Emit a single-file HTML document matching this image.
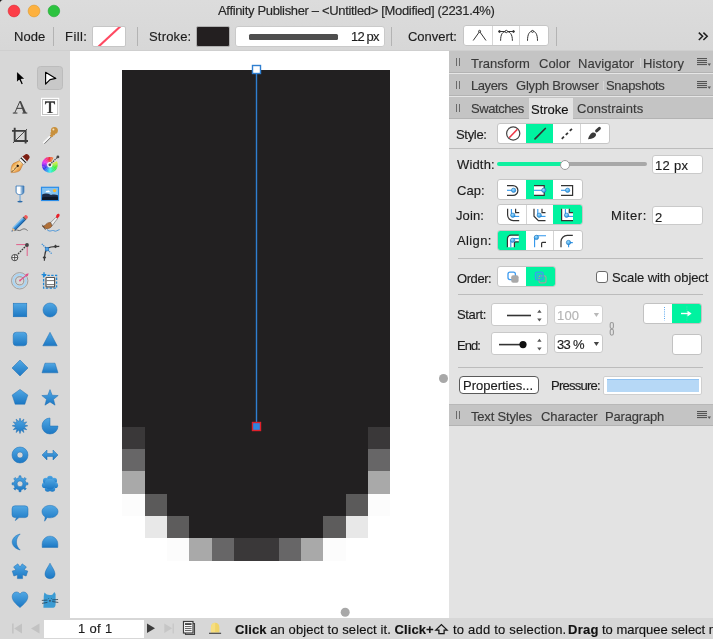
<!DOCTYPE html>
<html><head><meta charset="utf-8">
<style>
*{margin:0;padding:0;box-sizing:border-box}
html,body{width:713px;height:639px;overflow:hidden}
body{position:relative;background:#d9d9d9;font-family:"Liberation Sans",sans-serif;font-size:13px;color:#1a1a1a}
.a{position:absolute}
.t{position:absolute;white-space:nowrap;line-height:1;-webkit-text-stroke:0.15px currentColor;will-change:transform}
.tab{position:absolute;white-space:nowrap;line-height:1;color:#4b4b4b;font-size:13px}
.lb{position:absolute;white-space:nowrap;line-height:1;color:#1c1c1c;font-size:13px}
svg{position:absolute;left:0;top:0}
</style></head><body>

<div class="a" style="left:0;top:0;width:713px;height:50px;background:linear-gradient(#dcdcdc,#d7d7d7)"></div>
<div class="a" style="left:0;top:50px;width:713px;height:1px;background:#cfcfcf"></div>
<div class="a" style="left:0;top:51px;width:70px;height:567px;background:#d7d7d7"></div>
<div class="a" style="left:70px;top:51px;width:379px;height:567px;background:#ffffff"></div>
<div class="a" style="left:449px;top:51px;width:264px;height:567px;background:#e3e3e3"></div>
<div class="a" style="left:0;top:618px;width:713px;height:21px;background:#d7d7d7"></div>
<svg width="713" height="639" viewBox="0 0 713 639"><rect x="122" y="70" width="268" height="491" fill="#222021" shape-rendering="crispEdges"/></svg>
<svg width="713" height="639" viewBox="0 0 713 639" shape-rendering="crispEdges"><rect x="122" y="427" width="23.00" height="22.00" fill="#3a3839"/><rect x="368" y="427" width="22.00" height="22.00" fill="#3a3839"/><rect x="122" y="449" width="23.00" height="22.00" fill="#676667"/><rect x="368" y="449" width="22.00" height="22.00" fill="#676667"/><rect x="122" y="471" width="23.00" height="23.00" fill="#a9a9a9"/><rect x="368" y="471" width="22.00" height="23.00" fill="#a9a9a9"/><rect x="122" y="494" width="23.00" height="22.00" fill="#fcfcfc"/><rect x="368" y="494" width="22.00" height="22.00" fill="#fcfcfc"/><rect x="145" y="494" width="22.00" height="22.00" fill="#5b5a5a"/><rect x="346" y="494" width="22.00" height="22.00" fill="#5b5a5a"/><rect x="122" y="516" width="23.00" height="22.00" fill="#ffffff"/><rect x="368" y="516" width="22.00" height="22.00" fill="#ffffff"/><rect x="145" y="516" width="22.00" height="22.00" fill="#e8e8e8"/><rect x="346" y="516" width="22.00" height="22.00" fill="#e8e8e8"/><rect x="167" y="516" width="22.00" height="22.00" fill="#5d5c5c"/><rect x="323" y="516" width="23.00" height="22.00" fill="#5d5c5c"/><rect x="122" y="538" width="23.00" height="23.00" fill="#ffffff"/><rect x="368" y="538" width="22.00" height="23.00" fill="#ffffff"/><rect x="145" y="538" width="22.00" height="23.00" fill="#ffffff"/><rect x="346" y="538" width="22.00" height="23.00" fill="#ffffff"/><rect x="167" y="538" width="22.00" height="23.00" fill="#fcfcfc"/><rect x="323" y="538" width="23.00" height="23.00" fill="#fcfcfc"/><rect x="189" y="538" width="23.00" height="23.00" fill="#a9a9a9"/><rect x="301" y="538" width="22.00" height="23.00" fill="#a9a9a9"/><rect x="212" y="538" width="22.00" height="23.00" fill="#676667"/><rect x="279" y="538" width="22.00" height="23.00" fill="#676667"/><rect x="234" y="538" width="22.00" height="23.00" fill="#3a3839"/><rect x="256" y="538" width="23.00" height="23.00" fill="#3a3839"/></svg>
<svg width="713" height="639" viewBox="0 0 713 639">
<line x1="256.5" y1="70" x2="256.5" y2="426" stroke="#2f7fd0" stroke-width="1.4"/>
<rect x="252.5" y="65.5" width="8" height="8" fill="#ffffff" stroke="#2f7fd0" stroke-width="1.4"/>
<rect x="252.5" y="422.5" width="8" height="8" fill="#2f86e0" stroke="#e0202a" stroke-width="1.4"/>
<circle cx="443.5" cy="378.5" r="4.5" fill="#a8a8a8"/>
<circle cx="345.2" cy="612.3" r="4.5" fill="#a8a8a8"/>
</svg>
<svg width="713" height="639" viewBox="0 0 713 639">
<circle cx="14" cy="11" r="5.9" fill="#fc3e48" stroke="#dc2c36" stroke-width="0.6"/><path d="M0 0 H2.6 Q0.4 0.4 0 2.6 Z" fill="#111"/>
<circle cx="34" cy="11" r="5.9" fill="#fdb13f" stroke="#df9a2e" stroke-width="0.6"/>
<circle cx="53.9" cy="11" r="5.8" fill="#2cc33f" stroke="#1ea532" stroke-width="0.6"/>
</svg>
<div class="t" style="left:217.79px;top:3.50px;color:#262626;font-size:13px;font-weight:normal;letter-spacing:-0.333px;">Affinity Publisher – &lt;Untitled&gt; [Modified] (2231.4%)</div>
<div class="t" style="left:13.73px;top:29.63px;color:#1c1c1c;font-size:13px;font-weight:normal;letter-spacing:0.025px;">Node</div>
<div class="a" style="left:53px;top:27px;width:1px;height:19px;background:#b3b3b3"></div>
<div class="t" style="left:65.33px;top:29.80px;color:#1c1c1c;font-size:13px;font-weight:normal;letter-spacing:0.438px;">Fill:</div>
<div class="a" style="left:92px;top:26px;width:34px;height:21px;background:#fff;border:1px solid #c6c6c6;border-radius:2px"></div>
<svg width="713" height="639" viewBox="0 0 713 639"><defs><clipPath id="fc"><rect x="93" y="27" width="32" height="19"/></clipPath></defs><line x1="98.3" y1="46.8" x2="120.9" y2="25.9" stroke="#ff4a62" stroke-width="2.1" clip-path="url(#fc)"/></svg>
<div class="a" style="left:137px;top:27px;width:1px;height:19px;background:#b3b3b3"></div>
<div class="t" style="left:148.85px;top:29.75px;color:#1c1c1c;font-size:13px;font-weight:normal;letter-spacing:0.172px;">Stroke:</div>
<div class="a" style="left:196px;top:26px;width:34px;height:21px;background:#231f20;border:1px solid #b0b0b0;border-radius:2px"></div>
<div class="a" style="left:235px;top:26px;width:150px;height:21px;background:#fff;border:1px solid #cacaca;border-radius:3px"></div>
<div class="a" style="left:248.5px;top:34.2px;width:89px;height:5.8px;background:#4e4e4e;border-radius:1.5px"></div>
<div class="t" style="left:350.90px;top:29.84px;color:#1c1c1c;font-size:13px;font-weight:normal;letter-spacing:-0.853px;">12 px</div>
<div class="a" style="left:391px;top:27px;width:1px;height:19px;background:#b3b3b3"></div>
<div class="t" style="left:408.00px;top:29.71px;color:#1c1c1c;font-size:13px;font-weight:normal;letter-spacing:-0.032px;">Convert:</div>
<div class="a" style="left:463px;top:25px;width:86px;height:21px;background:#fff;border:1px solid #c6c6c6;border-radius:3px"></div>
<div class="a" style="left:492px;top:26px;width:1px;height:19px;background:#d6d6d6"></div>
<div class="a" style="left:519px;top:26px;width:1px;height:19px;background:#d6d6d6"></div>
<svg width="713" height="639" viewBox="0 0 713 639" fill="none" stroke="#333" stroke-width="1">
<path d="M473.2 40.5 L479.6 31.5 L486 40.5"/>
<circle cx="479.6" cy="31.3" r="1" fill="#fff"/>
<path d="M500.6 40.8 C500.6 34 502.6 31.5 506.3 31.5 C510 31.5 512.4 34 512.4 40.8"/>
<line x1="499.5" y1="31.5" x2="513.5" y2="31.5"/>
<circle cx="506.3" cy="31.5" r="1.2" fill="#fff"/>
<circle cx="499.5" cy="31.5" r="0.9" fill="#333"/><circle cx="513.5" cy="31.5" r="0.9" fill="#333"/>
<path d="M527.5 40.8 C527.5 34 529.5 31.2 532.5 31.2 C535.5 31.2 537.5 34 537.5 40.8"/>
<circle cx="532.5" cy="31.4" r="1" fill="#fff"/>
</svg>
<div class="a" style="left:556px;top:27px;width:1px;height:19px;background:#b3b3b3"></div>
<svg width="713" height="639" viewBox="0 0 713 639"><path d="M698.8 32.6 L702.6 36.3 L698.8 40 M703.4 32.6 L707.2 36.3 L703.4 40" fill="none" stroke="#1e1e1e" stroke-width="1.5"/></svg>
<div class="a" style="left:449px;top:51px;width:264px;height:21px;background:#c4c4c4"></div>
<div class="a" style="left:449px;top:72px;width:264px;height:1px;background:#b3b3b3"></div>
<div class="a" style="left:449px;top:73px;width:264px;height:1px;background:#e6e6e6"></div>
<div class="a" style="left:449px;top:74px;width:264px;height:21px;background:#c4c4c4"></div>
<div class="a" style="left:449px;top:95px;width:264px;height:1px;background:#b3b3b3"></div>
<div class="a" style="left:449px;top:96px;width:264px;height:1px;background:#e6e6e6"></div>
<div class="a" style="left:449px;top:97px;width:264px;height:21px;background:#c4c4c4"></div>
<div class="a" style="left:449px;top:118px;width:264px;height:1px;background:#b3b3b3"></div>
<div class="a" style="left:528.5px;top:97.5px;width:44px;height:22px;background:#e3e3e3"></div>
<div class="a" style="left:456px;top:58px;width:1.2px;height:8px;background:#6a6a6a"></div>
<div class="a" style="left:459px;top:58px;width:1.2px;height:8px;background:#6a6a6a"></div>
<div class="a" style="left:456px;top:81px;width:1.2px;height:8px;background:#6a6a6a"></div>
<div class="a" style="left:459px;top:81px;width:1.2px;height:8px;background:#6a6a6a"></div>
<div class="a" style="left:456px;top:104px;width:1.2px;height:8px;background:#6a6a6a"></div>
<div class="a" style="left:459px;top:104px;width:1.2px;height:8px;background:#6a6a6a"></div>
<div class="t" style="left:471.33px;top:56.80px;color:#3a3a3a;font-size:13px;font-weight:normal;letter-spacing:0.025px;">Transform</div>
<div class="t" style="left:538.70px;top:56.71px;color:#3a3a3a;font-size:13px;font-weight:normal;letter-spacing:0.056px;">Color</div>
<div class="t" style="left:578.43px;top:56.80px;color:#3a3a3a;font-size:13px;font-weight:normal;letter-spacing:0.051px;">Navigator</div>
<div class="a" style="left:639.5px;top:58px;width:1px;height:9px;background:#d6d6d6"></div>
<div class="t" style="left:643.23px;top:56.73px;color:#3a3a3a;font-size:13px;font-weight:normal;letter-spacing:0.110px;">History</div>
<svg width="713" height="639" viewBox="0 0 713 639"><g fill="#555">
<rect x="697" y="58" width="10" height="1.1"/><rect x="697" y="60" width="10" height="1.1"/><rect x="697" y="62" width="10" height="1.1"/><rect x="697" y="64" width="10" height="1.1"/>
<path d="M707.5 63.5 L711 63.5 L709.25 66 Z"/></g></svg>
<div class="t" style="left:470.53px;top:79.33px;color:#3a3a3a;font-size:13px;font-weight:normal;letter-spacing:-0.429px;">Layers</div>
<div class="t" style="left:515.60px;top:79.40px;color:#3a3a3a;font-size:13px;font-weight:normal;letter-spacing:-0.204px;">Glyph Browser</div>
<div class="a" style="left:602.5px;top:81px;width:1px;height:9px;background:#d6d6d6"></div>
<div class="t" style="left:606.35px;top:79.35px;color:#3a3a3a;font-size:13px;font-weight:normal;letter-spacing:-0.323px;">Snapshots</div>
<svg width="713" height="639" viewBox="0 0 713 639"><g fill="#555">
<rect x="697" y="81" width="10" height="1.1"/><rect x="697" y="83" width="10" height="1.1"/><rect x="697" y="85" width="10" height="1.1"/><rect x="697" y="87" width="10" height="1.1"/>
<path d="M707.5 86.5 L711 86.5 L709.25 89 Z"/></g></svg>
<div class="t" style="left:470.55px;top:101.95px;color:#3a3a3a;font-size:13px;font-weight:normal;letter-spacing:-0.439px;">Swatches</div>
<div class="t" style="left:531.15px;top:102.65px;color:#111;font-size:13px;font-weight:normal;letter-spacing:-0.009px;">Stroke</div>
<div class="t" style="left:576.70px;top:101.91px;color:#3a3a3a;font-size:13px;font-weight:normal;letter-spacing:0.045px;">Constraints</div>
<div class="a" style="left:449px;top:404px;width:264px;height:1px;background:#b8b8b8"></div>
<div class="a" style="left:449px;top:405px;width:264px;height:20px;background:#c4c4c4"></div>
<div class="a" style="left:449px;top:425px;width:264px;height:1px;background:#b3b3b3"></div>
<div class="a" style="left:456px;top:411px;width:1.2px;height:8px;background:#6a6a6a"></div>
<div class="a" style="left:459px;top:411px;width:1.2px;height:8px;background:#6a6a6a"></div>
<div class="t" style="left:471.33px;top:409.80px;color:#3a3a3a;font-size:13px;font-weight:normal;letter-spacing:-0.178px;">Text Styles</div>
<div class="t" style="left:540.70px;top:409.71px;color:#3a3a3a;font-size:13px;font-weight:normal;letter-spacing:-0.072px;">Character</div>
<div class="t" style="left:605.33px;top:409.80px;color:#3a3a3a;font-size:13px;font-weight:normal;letter-spacing:-0.190px;">Paragraph</div>
<svg width="713" height="639" viewBox="0 0 713 639"><g fill="#555">
<rect x="697" y="411" width="10" height="1.1"/><rect x="697" y="413" width="10" height="1.1"/><rect x="697" y="415" width="10" height="1.1"/><rect x="697" y="417" width="10" height="1.1"/>
<path d="M707.5 416.5 L711 416.5 L709.25 419 Z"/></g></svg>
<div class="t" style="left:456.25px;top:127.95px;color:#1c1c1c;font-size:13px;font-weight:normal;letter-spacing:-0.310px;">Style:</div>
<div class="a" style="left:497px;top:123px;width:113px;height:21px;background:#fff;border:1px solid #c6c6c6;border-radius:3px;overflow:hidden">
<div class="a" style="left:28px;top:-1px;width:27px;height:21px;background:#00f3a0"></div>
<div class="a" style="left:82px;top:0;width:1px;height:19px;background:#d4d4d4"></div>
</div>
<div class="a" style="left:449px;top:148px;width:264px;height:1px;background:#bcbcbc"></div>
<div class="t" style="left:456.71px;top:157.80px;color:#1c1c1c;font-size:13px;font-weight:normal;letter-spacing:0.157px;">Width:</div>
<div class="a" style="left:496.5px;top:162.3px;width:70px;height:4px;background:#0ff0a0;border-radius:2px"></div>
<div class="a" style="left:565px;top:162.3px;width:81.5px;height:4px;background:#a8a8a8;border-radius:2px"></div>
<div class="a" style="left:560px;top:159.5px;width:10px;height:10px;background:#fff;border:1px solid #9a9a9a;border-radius:50%"></div>
<div class="a" style="left:652px;top:155px;width:51px;height:19px;background:#fff;border:1px solid #cacaca;border-radius:3px"></div>
<div class="t" style="left:655.30px;top:159.24px;color:#1c1c1c;font-size:13px;font-weight:normal;letter-spacing:0.297px;">12 px</div>
<div class="t" style="left:456.60px;top:184.21px;color:#1c1c1c;font-size:13px;font-weight:normal;letter-spacing:0.065px;">Cap:</div>
<div class="a" style="left:497px;top:179px;width:86px;height:21px;background:#fff;border:1px solid #c6c6c6;border-radius:3px;overflow:hidden">
<div class="a" style="left:28px;top:-1px;width:27px;height:21px;background:#00f3a0"></div>
</div>
<div class="t" style="left:455.88px;top:208.70px;color:#1c1c1c;font-size:13px;font-weight:normal;letter-spacing:0.104px;">Join:</div>
<div class="a" style="left:497px;top:204px;width:86px;height:21px;background:#fff;border:1px solid #c6c6c6;border-radius:3px;overflow:hidden">
<div class="a" style="left:55px;top:-1px;width:30px;height:21px;background:#00f3a0"></div>
<div class="a" style="left:28px;top:0;width:1px;height:19px;background:#d4d4d4"></div>
</div>
<div class="t" style="left:611.03px;top:208.65px;color:#1c1c1c;font-size:13px;font-weight:normal;letter-spacing:0.554px;">Miter:</div>
<div class="a" style="left:652px;top:206px;width:51px;height:19px;background:#fff;border:1px solid #cacaca;border-radius:3px"></div>
<div class="t" style="left:655.12px;top:210.65px;color:#1c1c1c;font-size:13px;font-weight:normal;letter-spacing:0.000px;">2</div>
<div class="t" style="left:456.79px;top:233.52px;color:#1c1c1c;font-size:13px;font-weight:normal;letter-spacing:0.381px;">Align:</div>
<div class="a" style="left:497px;top:230px;width:86px;height:21px;background:#fff;border:1px solid #c6c6c6;border-radius:3px;overflow:hidden">
<div class="a" style="left:-1px;top:-1px;width:29px;height:21px;background:#00f3a0"></div>
<div class="a" style="left:55px;top:0;width:1px;height:19px;background:#d4d4d4"></div>
</div>
<div class="a" style="left:458px;top:257.5px;width:245px;height:1px;background:#bcbcbc"></div>
<div class="t" style="left:456.64px;top:271.61px;color:#1c1c1c;font-size:13px;font-weight:normal;letter-spacing:-0.430px;">Order:</div>
<div class="a" style="left:497px;top:266px;width:59px;height:21px;background:#fff;border:1px solid #c6c6c6;border-radius:3px;overflow:hidden">
<div class="a" style="left:28px;top:-1px;width:30px;height:21px;background:#00f3a0"></div>
</div>
<div class="a" style="left:596px;top:271px;width:12px;height:12px;background:#fff;border:1px solid #6a6a6a;border-radius:3px"></div>
<div class="t" style="left:612.25px;top:270.50px;color:#1c1c1c;font-size:13px;font-weight:normal;letter-spacing:-0.072px;">Scale with object</div>
<div class="a" style="left:458px;top:294px;width:245px;height:1px;background:#bcbcbc"></div>
<div class="t" style="left:456.95px;top:308.45px;color:#1c1c1c;font-size:13px;font-weight:normal;letter-spacing:-0.333px;">Start:</div>
<div class="a" style="left:491px;top:303px;width:57px;height:23px;background:#fff;border:1px solid #c9c9c9;border-radius:3px"></div>
<div class="a" style="left:554px;top:305px;width:49px;height:19px;background:#fff;border:1px solid #d2d2d2;border-radius:3px"></div>
<div class="t" style="left:557.30px;top:309.05px;color:#b4b4b4;font-size:13px;font-weight:normal;letter-spacing:0.150px;">100</div>
<div class="t" style="left:457.33px;top:338.80px;color:#1c1c1c;font-size:13px;font-weight:normal;letter-spacing:-0.945px;">End:</div>
<div class="a" style="left:491px;top:332px;width:57px;height:23px;background:#fff;border:1px solid #c9c9c9;border-radius:3px"></div>
<div class="a" style="left:554px;top:334px;width:49px;height:19px;background:#fff;border:1px solid #c9c9c9;border-radius:3px"></div>
<div class="t" style="left:557.05px;top:337.85px;color:#1c1c1c;font-size:13px;font-weight:normal;letter-spacing:-0.714px;">33 %</div>
<div class="a" style="left:643px;top:303px;width:59px;height:21px;background:#fff;border:1px solid #c2c2c2;border-radius:3px;overflow:hidden"><div class="a" style="left:28px;top:-1px;width:29px;height:20px;background:#00f3a0"></div></div>
<div class="a" style="left:672px;top:334px;width:30px;height:21px;background:#fff;border:1px solid #c2c2c2;border-radius:3px"></div>
<div class="a" style="left:458px;top:367px;width:245px;height:1px;background:#bcbcbc"></div>
<div class="a" style="left:459px;top:376px;width:80px;height:18px;background:#fff;border:1px solid #5a5a5a;border-radius:4px"></div>
<div class="t" style="left:463.43px;top:379.10px;color:#1c1c1c;font-size:13px;font-weight:normal;letter-spacing:-0.004px;">Properties...</div>
<div class="t" style="left:551.03px;top:378.60px;color:#1c1c1c;font-size:13px;font-weight:normal;letter-spacing:-0.754px;">Pressure:</div>
<div class="a" style="left:603px;top:376px;width:99px;height:19px;background:#fff;border:1px solid #cfcfcf;border-radius:2px"></div>
<div class="a" style="left:606.5px;top:379px;width:92px;height:12.5px;background:#b6d8f6;border-top:1px solid #8fc2f2"></div>
<svg width="713" height="639" viewBox="0 0 713 639">
<defs><radialGradient id="dot" cx="0.4" cy="0.35" r="0.7"><stop offset="0" stop-color="#9fdcff"/><stop offset="1" stop-color="#1e8fe0"/></radialGradient></defs>
<!-- style -->
<circle cx="513.2" cy="133.5" r="6.6" fill="#fff" stroke="#444" stroke-width="1.2"/>
<line x1="509.2" y1="137.8" x2="517.4" y2="129.3" stroke="#ee3545" stroke-width="1.6"/>
<line x1="535" y1="138.8" x2="545.3" y2="128.5" stroke="#333" stroke-width="1.7" stroke-linecap="round"/>
<line x1="561.8" y1="138.8" x2="572.3" y2="128.5" stroke="#333" stroke-width="1.8" stroke-dasharray="3 2.6"/>
<path d="M588 139.3 C588.8 136.2 590.2 133.8 592.6 132.6 C594.2 132 595.9 132.9 596 134.6 C596.1 137.2 592.8 139.2 588 139.3 Z" fill="#3a3a3a"/><line x1="596.6" y1="130.9" x2="599.4" y2="128.3" stroke="#3a3a3a" stroke-width="3" stroke-linecap="round"/>
<!-- cap -->
<g fill="none" stroke="#333" stroke-width="1.2">
<path d="M507 185.6 H513 A4.9 4.9 0 0 1 513 195.4 H507"/>
<path d="M534 185.6 H544.2 V195.4 H534" fill="#fff"/>
<path d="M561 185.6 H572.6 V195.4 H561"/>
</g>
<g stroke="#2f95ec" stroke-width="1.1">
<line x1="507" y1="190.3" x2="513" y2="190.3"/><line x1="534" y1="190.3" x2="543" y2="190.3"/><line x1="561" y1="190.3" x2="567" y2="190.3"/>
</g>
<g fill="url(#dot)" stroke="#1a6fb5" stroke-width="0.5">
<circle cx="513.6" cy="190.3" r="2.2"/><circle cx="543.8" cy="190.3" r="2.2"/><circle cx="567.6" cy="190.3" r="2.2"/>
</g>
<!-- join -->
<g fill="none" stroke="#333" stroke-width="1.2">
<path d="M507.6 208.8 V215 A5.6 5.6 0 0 0 513.2 220.6 H519.2"/>
<path d="M515.6 208.8 V212.6 H519.2"/>
<path d="M534 208.8 V216.2 L538.4 220.6 H545.5"/>
<path d="M542 208.8 V212.6 H545.5"/>
<path d="M561.6 208.8 V220.6 H573 V212.6 H569.3 V208.8 Z" fill="#fff" stroke="none"/><path d="M561.6 208.8 V220.6 H573"/>
<path d="M569.3 208.8 V212.6 H573"/>
</g>
<g stroke="#2f95ec" stroke-width="1.1">
<line x1="511.4" y1="209" x2="511.4" y2="215.5"/><line x1="512" y1="216.4" x2="519.2" y2="216.4"/>
<line x1="537.8" y1="209" x2="537.8" y2="215.5"/><line x1="538.4" y1="216.4" x2="545.5" y2="216.4"/>
<line x1="565.4" y1="209" x2="565.4" y2="215.5"/><line x1="566" y1="216.4" x2="573" y2="216.4"/>
</g>
<g fill="url(#dot)" stroke="#1a6fb5" stroke-width="0.5">
<circle cx="512.8" cy="215.2" r="2.2"/><circle cx="539.2" cy="215.2" r="2.2"/><circle cx="566.6" cy="215.2" r="2.2"/>
</g>
<!-- align -->
<g fill="none" stroke="#333" stroke-width="1.2">
<path d="M507.4 247.2 V238.8 A3.6 3.6 0 0 1 511 235.2 H518.8 V241.8 H515.6 A1.2 1.2 0 0 0 514.4 243 V247.2 Z" fill="#fff" stroke="none"/><path d="M507.4 247.2 V238.8 A3.6 3.6 0 0 1 511 235.2 H518.8"/>
<path d="M514.4 247.2 V243 A1.2 1.2 0 0 1 515.6 241.8 H518.8"/>
<path d="M541.6 247.2 V243.4 A1 1 0 0 1 542.6 242.4 H546"/>
<path d="M561 247.2 V241.6 A6.2 6.2 0 0 1 567.2 235.4 H572.8"/>
</g>
<g fill="none" stroke="#2f95ec" stroke-width="1.1">
<path d="M510.8 247.2 V241.6 A3 3 0 0 1 513.8 238.6 H518.8"/>
<path d="M534.6 247.2 V238.2 A2.4 2.4 0 0 1 537 235.8 H546"/>
<path d="M568.6 243 V247.2 M568.6 242.6 H572.8"/>
</g>
<g fill="url(#dot)" stroke="#1a6fb5" stroke-width="0.5">
<circle cx="512.6" cy="240.3" r="2.2"/><circle cx="536.4" cy="237.4" r="2.2"/><circle cx="568.5" cy="242.5" r="2.2"/>
</g>
<!-- order -->
<rect x="508" y="272.2" width="7.4" height="7.4" rx="2" fill="none" stroke="#3d9bf0" stroke-width="1.3"/>
<rect x="511.2" y="275.3" width="7.4" height="7.4" rx="2" fill="#a9a9a9"/>
<rect x="539" y="275.8" width="7" height="7" rx="1.6" fill="none" stroke="#a0a0a0" stroke-width="1.2"/>
<rect x="535.5" y="272.2" width="7.6" height="7.6" rx="1.8" fill="none" stroke="#3d9bf0" stroke-width="1.3"/>
<rect x="537.7" y="274.4" width="3.2" height="3.2" fill="none" stroke="#3d9bf0" stroke-width="0.8"/>
<!-- start/end line samples -->
<line x1="507" y1="315.5" x2="531" y2="315.5" stroke="#333" stroke-width="1.6"/>
<line x1="499" y1="344.6" x2="523" y2="344.6" stroke="#333" stroke-width="1.6"/>
<circle cx="523" cy="344.6" r="3.6" fill="#111"/>
<g fill="#555">
<path d="M537.2 312.8 L539.4 309.8 L541.6 312.8 Z"/><path d="M537.2 318.4 L539.4 321.4 L541.6 318.4 Z"/>
<path d="M537.2 341.8 L539.4 338.8 L541.6 341.8 Z"/><path d="M537.2 347.4 L539.4 350.4 L541.6 347.4 Z"/>
<path d="M593.8 313 L599 313 L596.4 317 Z" fill="#b8b8b8"/>
<path d="M593.8 342 L599 342 L596.4 346 Z" fill="#444"/>
</g>
<!-- link -->
<g fill="none" stroke="#9a9a9a" stroke-width="1.1">
<rect x="610.2" y="322.5" width="3.2" height="6" rx="1.6"/><rect x="610.2" y="329.2" width="3.2" height="6" rx="1.6"/>
</g>
<!-- toggle -->
<line x1="664.5" y1="307" x2="664.5" y2="320.5" stroke="#5aa8f0" stroke-width="1" stroke-dasharray="1 1.2"/>
<line x1="686.9" y1="306.5" x2="686.9" y2="320.5" stroke="#6ad0c0" stroke-width="0.8" stroke-dasharray="1 1.2"/>
<path d="M681 313.5 H688.5" stroke="#fff" stroke-width="1.4"/>
<path d="M687.5 310.8 L691.6 313.6 L687.5 316.4 Z" fill="#fff"/>
</svg>
<div class="a" style="left:44px;top:620px;width:100px;height:18px;background:#fff"></div>
<div class="t" style="left:77.60px;top:622.24px;color:#1c1c1c;font-size:13px;font-weight:normal;letter-spacing:0.350px;">1 of 1</div>
<svg width="713" height="639" viewBox="0 0 713 639">
<rect x="12.3" y="623.5" width="1.2" height="10" fill="#bdbdbd"/>
<path d="M22 623.6 L14.2 628.5 L22 633.4 Z" fill="#c2c2c2"/>
<path d="M39.5 623.6 L31 628.5 L39.5 633.4 Z" fill="#c2c2c2"/>
<path d="M147 623.6 L155 628.3 L147 633 Z" fill="#3c3c3c"/>
<path d="M164.3 623.6 L172.2 628.3 L164.3 633 Z" fill="#c6c6c6"/>
<rect x="172.6" y="623.5" width="1.2" height="10" fill="#c6c6c6"/>
<path d="M193 623.5 H194.5 V634.5 H185.5 V633" fill="none" stroke="#444" stroke-width="1.1"/>
<rect x="183.5" y="621.5" width="9.5" height="11.5" fill="#fff" stroke="#3c3c3c" stroke-width="1.2"/>
<rect x="185" y="623.2" width="6.6" height="1.7" fill="#333"/>
<g stroke="#444" stroke-width="0.9"><line x1="185" y1="626.6" x2="191.6" y2="626.6"/><line x1="185" y1="628.6" x2="191.6" y2="628.6"/><line x1="185" y1="630.6" x2="191.6" y2="630.6"/></g>
<path d="M210.9 632.6 V627.5 C210.9 624.5 212.6 622.7 215.15 622.7 C217.7 622.7 219.4 624.5 219.4 627.5 V632.6 Z" fill="#f0d468"/>
<path d="M210.9 632.6 V627.5 C210.9 624.5 212.6 622.7 215.15 622.7 V632.6 Z" fill="#f6de80"/>
<rect x="209" y="632.7" width="12.1" height="1.3" fill="#555"/>
</svg>
<div class="t" style="left:234.71px;top:623.00px;color:#111;font-size:13px;font-weight:normal;letter-spacing:0.091px;"><b>Click</b> an object to select it. <b>Click+</b></div>
<div class="t" style="left:452.92px;top:623.00px;color:#111;font-size:13px;font-weight:normal;letter-spacing:0.214px;">to add to selection.</div>
<div class="t" style="left:568.40px;top:623.00px;color:#111;font-size:13px;font-weight:normal;letter-spacing:0.265px;"><b>Drag</b></div>
<div class="t" style="left:602.32px;top:623.00px;color:#111;font-size:13px;font-weight:normal;letter-spacing:-0.007px;">to marquee select multiple objects.</div>
<svg width="713" height="639" viewBox="0 0 713 639"><path d="M438.9 633.6 V630.1 H435.8 L441.4 624.6 L447.1 630.1 H444.1 V633.6 Z" fill="none" stroke="#151515" stroke-width="1.25" stroke-linejoin="miter"/></svg>
<svg width="713" height="639" viewBox="0 0 713 639"><defs><linearGradient id="bg" x1="0" y1="0" x2="0" y2="1"><stop offset="0" stop-color="#52a8e4"/><stop offset="1" stop-color="#1b77c3"/></linearGradient></defs><rect x="37.5" y="66.5" width="25" height="23" rx="3" fill="#c8c8c8" stroke="#bcbcbc" stroke-width="1"/><path d="M16.6 71.2 V82.6 L19.2 80.1 L21.4 84.7 L23.3 83.8 L21.2 79.3 L24.9 79.1 Z" fill="#000" stroke="#fff" stroke-width="0.7" stroke-linejoin="round"/><path d="M45.6 72.2 L55.8 78.4 L50 79.6 L45.6 84.1 Z" fill="#fff" stroke="#000" stroke-width="1.15" stroke-linejoin="round"/><g fill="#464646"><path d="M19.3 100.9 L20.9 100.9 L26.3 113 L23.5 113 Z"/><rect x="16.5" y="107.8" width="7" height="1.1"/><rect x="12.8" y="112.5" width="4.6" height="1.1"/><rect x="22.3" y="112.5" width="5" height="1.1"/></g><line x1="19.8" y1="101.6" x2="14.7" y2="113" stroke="#464646" stroke-width="1"/><rect x="41.5" y="98.3" width="17.2" height="17.2" fill="#fff" stroke="#fff" stroke-width="1"/><rect x="42.5" y="99.5" width="15.2" height="15" fill="none" stroke="#c2c2c2" stroke-width="1"/><path d="M45 101.2 H55 L55.1 104.6 L54.5 104.6 C54.1 103.3 53.5 102.8 52.3 102.8 H51.1 V111.5 C51.1 112.1 51.9 112.4 53.1 112.5 V113.1 H46.9 V112.5 C48.1 112.4 48.9 112.1 48.9 111.5 V102.8 H47.7 C46.5 102.8 45.9 103.3 45.5 104.6 L44.9 104.6 Z" fill="#3a3a3a"/><g stroke="#3d3d3d" stroke-width="1.9" fill="none"><path d="M12 130.9 H25.6 V143.6"/><path d="M14.7 127.8 V141 H28"/></g><line x1="13" y1="143" x2="27" y2="129" stroke="#3d3d3d" stroke-width="0.9"/><path d="M42.6 142.6 L49.6 135.6 L51.2 137.2 L44.2 144.2 Z" fill="#f6f6f6"/><line x1="44.4" y1="143.8" x2="51.2" y2="137" stroke="#5a5a5a" stroke-width="0.9"/><path d="M49.6 135.6 L51 134.2 C49.8 133 50.4 131.8 51.6 132 C52 130.2 53.2 132 54.4 133.2 C56 134.6 54.8 135.6 53.4 135.2 C53.6 136.4 52.6 137 51.2 137.2 Z" fill="#c89040"/><circle cx="54.4" cy="130.6" r="3.5" fill="#c8903c"/><circle cx="53.4" cy="129.5" r="1" fill="#f4e0c0"/><g transform="translate(11 172.6) rotate(-45)"><defs><linearGradient id="nib" x1="0" y1="0" x2="0" y2="1"><stop offset="0" stop-color="#e89838"/><stop offset="0.45" stop-color="#fcd490"/><stop offset="1" stop-color="#e08a30"/></linearGradient></defs><path d="M0 0 C2.5 -2.6 5.5 -4.8 8 -4.8 L14.6 -2.4 V2.4 L8 4.8 C5.5 4.8 2.5 2.6 0 0 Z" fill="url(#nib)" stroke="#b86a1c" stroke-width="0.45"/><rect x="14.6" y="-3.3" width="4.9" height="6.6" fill="#f2f2f2" stroke="#666" stroke-width="0.4"/><rect x="16.8" y="-3.4" width="1.3" height="6.8" fill="#222"/><path d="M19.5 -3.3 L23.4 -2.7 C24.4 -2.3 24.8 -1.1 24.8 0 C24.8 1.1 24.4 2.3 23.4 2.7 L19.5 3.3 Z" fill="#7c1e12"/><line x1="0.9" y1="0" x2="9.4" y2="0" stroke="#2a1808" stroke-width="0.9" stroke-dasharray="1.1 0.6"/><circle cx="9.5" cy="0" r="1.2" fill="#2a1808"/></g><g transform="translate(49.8 164.8)"><path d="M0 0 L7.10 -3.46 A7.9 7.9 0 0 1 7.68 -1.84 Z" fill="hsl(70,88%,57%)"/><path d="M0 0 L7.67 -1.91 A7.9 7.9 0 0 1 7.90 -0.21 Z" fill="hsl(82,88%,57%)"/><path d="M0 0 L7.90 -0.28 A7.9 7.9 0 0 1 7.77 1.44 Z" fill="hsl(94,88%,57%)"/><path d="M0 0 L7.78 1.37 A7.9 7.9 0 0 1 7.30 3.02 Z" fill="hsl(106,88%,57%)"/><path d="M0 0 L7.32 2.96 A7.9 7.9 0 0 1 6.51 4.47 Z" fill="hsl(118,88%,57%)"/><path d="M0 0 L6.55 4.42 A7.9 7.9 0 0 1 5.44 5.73 Z" fill="hsl(130,88%,57%)"/><path d="M0 0 L5.49 5.68 A7.9 7.9 0 0 1 4.13 6.74 Z" fill="hsl(142,88%,57%)"/><path d="M0 0 L4.19 6.70 A7.9 7.9 0 0 1 2.64 7.45 Z" fill="hsl(154,88%,57%)"/><path d="M0 0 L2.70 7.42 A7.9 7.9 0 0 1 1.03 7.83 Z" fill="hsl(166,88%,57%)"/><path d="M0 0 L1.10 7.82 A7.9 7.9 0 0 1 -0.62 7.88 Z" fill="hsl(178,88%,57%)"/><path d="M0 0 L-0.55 7.88 A7.9 7.9 0 0 1 -2.24 7.57 Z" fill="hsl(190,88%,57%)"/><path d="M0 0 L-2.18 7.59 A7.9 7.9 0 0 1 -3.77 6.94 Z" fill="hsl(202,88%,57%)"/><path d="M0 0 L-3.71 6.98 A7.9 7.9 0 0 1 -5.13 6.01 Z" fill="hsl(214,88%,57%)"/><path d="M0 0 L-5.08 6.05 A7.9 7.9 0 0 1 -6.27 4.81 Z" fill="hsl(226,88%,57%)"/><path d="M0 0 L-6.23 4.86 A7.9 7.9 0 0 1 -7.13 3.40 Z" fill="hsl(238,88%,57%)"/><path d="M0 0 L-7.10 3.46 A7.9 7.9 0 0 1 -7.68 1.84 Z" fill="hsl(250,88%,57%)"/><path d="M0 0 L-7.67 1.91 A7.9 7.9 0 0 1 -7.90 0.21 Z" fill="hsl(262,88%,57%)"/><path d="M0 0 L-7.90 0.28 A7.9 7.9 0 0 1 -7.77 -1.44 Z" fill="hsl(274,88%,57%)"/><path d="M0 0 L-7.78 -1.37 A7.9 7.9 0 0 1 -7.30 -3.02 Z" fill="hsl(286,88%,57%)"/><path d="M0 0 L-7.32 -2.96 A7.9 7.9 0 0 1 -6.51 -4.47 Z" fill="hsl(298,88%,57%)"/><path d="M0 0 L-6.55 -4.42 A7.9 7.9 0 0 1 -5.44 -5.73 Z" fill="hsl(310,88%,57%)"/><path d="M0 0 L-5.49 -5.68 A7.9 7.9 0 0 1 -4.13 -6.74 Z" fill="hsl(322,88%,57%)"/><path d="M0 0 L-4.19 -6.70 A7.9 7.9 0 0 1 -2.64 -7.45 Z" fill="hsl(334,88%,57%)"/><path d="M0 0 L-2.70 -7.42 A7.9 7.9 0 0 1 -1.03 -7.83 Z" fill="hsl(346,88%,57%)"/><path d="M0 0 L-1.10 -7.82 A7.9 7.9 0 0 1 0.62 -7.88 Z" fill="hsl(358,88%,57%)"/><path d="M0 0 L0.55 -7.88 A7.9 7.9 0 0 1 2.24 -7.57 Z" fill="hsl(10,88%,57%)"/><path d="M0 0 L2.18 -7.59 A7.9 7.9 0 0 1 3.71 -6.98 Z" fill="hsl(22,88%,57%)"/><circle r="2.7" fill="#f4f4f4"/></g><line x1="49.8" y1="164.8" x2="57.9" y2="156.9" stroke="#444" stroke-width="1.2" stroke-dasharray="1.4 0.8"/><circle cx="49.8" cy="164.8" r="1.35" fill="#444"/><circle cx="57.9" cy="156.9" r="1.4" fill="#444"/><defs><linearGradient id="gl" x1="0" y1="0" x2="1" y2="0"><stop offset="0" stop-color="#9cc0e0"/><stop offset="0.15" stop-color="#ffffff"/><stop offset="0.5" stop-color="#ffffff"/><stop offset="0.62" stop-color="#b0cce6"/><stop offset="1" stop-color="#2f70b0"/></linearGradient></defs><path d="M16 186 H23.9 V191.6 C23.9 193.6 22.4 194.6 20 194.6 C17.6 194.6 16 193.6 16 191.6 Z" fill="url(#gl)" stroke="#3a78b8" stroke-width="0.8"/><rect x="19.25" y="194.5" width="1.6" height="6.6" fill="#8fb6da"/><ellipse cx="20" cy="201.6" rx="2.7" ry="0.85" fill="#2a6aa8"/><rect x="41.5" y="187.3" width="17" height="13.2" fill="#82c2f2" stroke="#2a8de8" stroke-width="1.2"/><circle cx="54.6" cy="190.6" r="1.7" fill="#f8b830"/><path d="M45.5 192.2 C46 191 47 190.6 47.6 190.8 C48.4 190.2 49.6 190.6 49.6 191.6 L51.2 192.2 Z" fill="#fff"/><path d="M42.1 194.5 C45 193 48 193.4 51 195 C53.5 194.4 56 194.5 57.9 195.2 V199.9 H42.1 Z" fill="#1c2c48"/><path d="M42.1 197.5 C46 196.5 50 197.2 57.9 196.8 V199.9 H42.1 Z" fill="#0e1828"/><g transform="translate(11.6 231.4) rotate(-45)"><path d="M0 0 L3.4 -1.9 H17.6 V1.9 H3.4 Z" fill="#2f86d2"/><rect x="3.4" y="-1.9" width="14.2" height="1.1" fill="#7cc0f0"/><rect x="3.4" y="0.9" width="14.2" height="1" fill="#1a5a9a"/><path d="M0 0 L3.4 -1.9 V1.9 Z" fill="#f0c088"/><path d="M0 0 L1.3 -0.75 V0.75 Z" fill="#2a5aa0"/><rect x="17.6" y="-1.9" width="1.6" height="3.8" fill="#555"/><path d="M19.2 -1.9 H20.6 C21.6 -1.9 22 -1 22 0 C22 1 21.6 1.9 20.6 1.9 H19.2 Z" fill="#f05858"/></g><path d="M14.5 230.6 C17 228.6 18.5 231.8 21 230.1 C23 228.6 25 228.2 27.6 230.6" stroke="#555" stroke-width="0.8" fill="none"/><path d="M42.4 226.4 L45.6 228.4 C48.5 229.2 51 227.8 52.2 225.6 L50.8 222.4 C48.4 222.2 46 223.5 45 225.6 Z" fill="#b07038" stroke="#6a3a18" stroke-width="0.5"/><path d="M50.8 222.4 L52.2 225.6 L57.5 218.6 L56 217.2 Z" fill="#eee" stroke="#555" stroke-width="0.5"/><path d="M56 217.2 L57.5 218.6 L59.2 216.6 C60 215.4 59.6 214 58.6 213.8 C57.6 213.6 56.6 214.6 56.2 215.8 Z" fill="#e8202a"/><path d="M47 229.5 C50 232.8 52 229.5 54 230.8 C56 232 57.5 230 59.6 229.6" stroke="#3d8fd8" stroke-width="0.9" fill="none"/><line x1="42.2" y1="224.8" x2="45.5" y2="229.8" stroke="#333" stroke-width="0.7"/><path d="M16.2 244.6 H27.2 V256" stroke="#e0608a" stroke-width="1" fill="none"/><line x1="26.8" y1="245" x2="16.5" y2="255.6" stroke="#3a3a3a" stroke-width="1.3" stroke-dasharray="1.8 0.9"/><circle cx="27" cy="245" r="1.9" fill="#444"/><circle cx="14.7" cy="257.6" r="3.1" fill="#fff" stroke="#444" stroke-width="1"/><path d="M11.6 257.6 H17.8 M14.7 254.5 V260.7" stroke="#444" stroke-width="0.9"/><line x1="41.8" y1="243.8" x2="52.2" y2="254.2" stroke="#3d8fd8" stroke-width="1.2" stroke-dasharray="1.3 0.8"/><path d="M47 249 C48.5 247.2 51 246.4 59.3 246.4" stroke="#3a3a3a" stroke-width="1.2" fill="none"/><path d="M47 249 C45.5 250.8 44.4 253 44.4 260.8" stroke="#3a3a3a" stroke-width="1.2" fill="none"/><path d="M55.5 244.6 L57.3 246.4 L55.5 248.2 L53.7 246.4 Z" fill="#3a3a3a"/><path d="M44.4 255.7 L46.2 257.5 L44.4 259.3 L42.6 257.5 Z" fill="#3a3a3a"/><rect x="45.2" y="247.3" width="3.6" height="3.6" fill="#4aa0e8" stroke="#1a5fa0" stroke-width="0.5"/><circle cx="19.7" cy="280.8" r="8.2" fill="none" stroke="#9a9a9a" stroke-width="0.9"/><circle cx="19.7" cy="280.8" r="6.3" fill="none" stroke="#a8d4f4" stroke-width="1.8"/><circle cx="19.7" cy="280.8" r="4.1" fill="none" stroke="#8a8a8a" stroke-width="0.9"/><line x1="20" y1="280.5" x2="27.4" y2="274.4" stroke="#e0508a" stroke-width="1.2"/><path d="M28.7 273.2 L25.2 274.2 L27.6 276.6 Z" fill="#e0508a"/><circle cx="20" cy="280.5" r="0.9" fill="#e0508a"/><rect x="43.6" y="275.4" width="13" height="12.8" fill="none" stroke="#1e88d8" stroke-width="1.3" stroke-dasharray="2.4 1.4"/><path d="M41.6 274.6 H46.4 M44 272.2 V277" stroke="#1e88d8" stroke-width="1.3"/><rect x="46" y="277.5" width="8.6" height="9.4" rx="0.6" fill="#fff" stroke="#555" stroke-width="1.2"/><line x1="46.5" y1="280.6" x2="54" y2="280.6" stroke="#666" stroke-width="0.9"/><line x1="46.5" y1="284.6" x2="54" y2="284.6" stroke="#666" stroke-width="0.9"/><rect x="13.2" y="303.2" width="13.6" height="13.6" fill="url(#bg)" stroke="#1a6db3" stroke-width="0.5"/><circle cx="50" cy="310" r="7" fill="url(#bg)" stroke="#1a6db3" stroke-width="0.5"/><rect x="13.2" y="332.2" width="13.6" height="13.6" rx="3.2" fill="url(#bg)" stroke="#1a6db3" stroke-width="0.5"/><path d="M50 332.3 L57.2 345.8 H42.8 Z" fill="url(#bg)" stroke="#1a6db3" stroke-width="0.5"/><path d="M20 360 L28 368 L20 376 L12 368 Z" fill="url(#bg)" stroke="#1a6db3" stroke-width="0.5"/><path d="M45 363.2 H55 L58 372.8 H42 Z" fill="url(#bg)" stroke="#1a6db3" stroke-width="0.5"/><polygon points="20.00,389.40 27.80,395.07 24.82,404.23 15.18,404.23 12.20,395.07" fill="url(#bg)" stroke="#1a6db3" stroke-width="0.5"/><polygon points="50.00,389.60 52.17,395.21 58.18,395.54 53.52,399.34 55.05,405.16 50.00,401.90 44.95,405.16 46.48,399.34 41.82,395.54 47.83,395.21" fill="url(#bg)" stroke="#1a6db3" stroke-width="0.5"/><polygon points="20.00,418.00 21.14,421.55 23.90,419.05 23.11,422.69 26.75,421.90 24.25,424.66 27.80,425.80 24.25,426.94 26.75,429.70 23.11,428.91 23.90,432.55 21.14,430.05 20.00,433.60 18.86,430.05 16.10,432.55 16.89,428.91 13.25,429.70 15.75,426.94 12.20,425.80 15.75,424.66 13.25,421.90 16.89,422.69 16.10,419.05 18.86,421.55" fill="url(#bg)" stroke="#1a6db3" stroke-width="0.5"/><path d="M50 426 V418 A8 8 0 1 0 58 426 Z" fill="url(#bg)" stroke="#1a6db3" stroke-width="0.5"/><path d="M28 455 A8 8 0 1 0 12 455 A8 8 0 1 0 28 455 Z M23 455 A3 3 0 1 1 17 455 A3 3 0 1 1 23 455 Z" fill-rule="evenodd" fill="url(#bg)" stroke="#1a6db3" stroke-width="0.5"/><path d="M42 455 L47 450 V453.6 H53 V450 L58 455 L53 460 V456.4 H47 V460 Z" fill="url(#bg)" stroke="#1a6db3" stroke-width="0.5"/><path d="M18.93 477.69 L19.00 475.86 L21.00 475.86 L21.07 477.69 L23.57 478.73 L24.90 477.48 L26.32 478.90 L25.07 480.23 L26.11 482.73 L27.94 482.80 L27.94 484.80 L26.11 484.87 L25.07 487.37 L26.32 488.70 L24.90 490.12 L23.57 488.87 L21.07 489.91 L21.00 491.74 L19.00 491.74 L18.93 489.91 L16.43 488.87 L15.10 490.12 L13.68 488.70 L14.93 487.37 L13.89 484.87 L12.06 484.80 L12.06 482.80 L13.89 482.73 L14.93 480.23 L13.68 478.90 L15.10 477.48 L16.43 478.73 Z M22.9 483.8 A2.9 2.9 0 1 0 17.1 483.8 A2.9 2.9 0 1 0 22.9 483.8 Z" fill-rule="evenodd" fill="url(#bg)" stroke="#1a6db3" stroke-width="0.5"/><g fill="url(#bg)"><circle cx="50.00" cy="478.75" r="2.95"/><circle cx="54.10" cy="480.73" r="2.95"/><circle cx="55.12" cy="485.17" r="2.95"/><circle cx="52.28" cy="488.73" r="2.95"/><circle cx="47.72" cy="488.73" r="2.95"/><circle cx="44.88" cy="485.17" r="2.95"/><circle cx="45.90" cy="480.73" r="2.95"/><circle cx="50" cy="484" r="5.55"/></g><path d="M15 505.8 H25 A3 3 0 0 1 28 508.8 V514.6 A3 3 0 0 1 25 517.6 H19 L15.3 520.6 L16.6 517.6 H15 A3 3 0 0 1 12 514.6 V508.8 A3 3 0 0 1 15 505.8 Z" fill="url(#bg)" stroke="#1a6db3" stroke-width="0.5"/><path d="M50 505.4 C54.6 505.4 58 508.2 58 511.6 C58 515 54.6 517.8 50 517.8 C49 517.8 48 517.7 47.2 517.5 L44.6 521.2 L45.2 517 C43.2 515.8 42 513.8 42 511.6 C42 508.2 45.4 505.4 50 505.4 Z" fill="url(#bg)" stroke="#1a6db3" stroke-width="0.5"/><path d="M20.2 534 C15.5 535 12.2 538.6 12.2 542 C12.2 545.5 15.5 549 20.2 550 C17.6 547.6 16.4 545 16.4 542 C16.4 539 17.6 536.4 20.2 534 Z" fill="url(#bg)" stroke="#1a6db3" stroke-width="0.5"/><path d="M42.2 547.4 V544.2 C42.2 539.6 45.8 536.2 50 536.2 C54.2 536.2 57.8 539.6 57.8 544.2 V547.4 Z" fill="url(#bg)" stroke="#1a6db3" stroke-width="0.5"/><polygon points="22.53,574.78 22.60,578.60 17.40,578.60 17.47,574.78 13.86,576.03 12.25,571.08 15.91,569.97 13.61,566.92 17.81,563.87 20.00,567.00 22.19,563.87 26.39,566.92 24.09,569.97 27.75,571.08 26.14,576.03" stroke-linejoin="round" fill="url(#bg)" stroke="#1a6db3" stroke-width="0.5"/><path d="M50 563.2 C51.5 566.5 55 570.5 55 574 C55 576.8 52.8 578.7 50 578.7 C47.2 578.7 45 576.8 45 574 C45 570.5 48.5 566.5 50 563.2 Z" fill="url(#bg)" stroke="#1a6db3" stroke-width="0.5"/><path d="M20 607.6 C16 604 12.2 601 12.2 596.6 C12.2 593.8 14.2 592 16.4 592 C18 592 19.2 592.8 20 594.2 C20.8 592.8 22 592 23.6 592 C25.8 592 27.8 593.8 27.8 596.6 C27.8 601 24 604 20 607.6 Z" fill="url(#bg)" stroke="#1a6db3" stroke-width="0.5"/><path d="M43.4 607.7 L43.8 596 L44.4 592.6 L46.8 594.5 C48.4 595.1 51.4 595.1 52.6 594.4 L54.4 591.9 L55.6 594 V604.2 C55.5 606.2 54.8 607.6 53.2 607.7 Z" fill="#3b9bd3"/><g stroke="#1e3a50" stroke-width="0.75" stroke-linecap="round"><path d="M42.2 600.4 L47 600.1 M42.4 603.3 L47 602.5 M52.6 599.9 L57.7 599.5 M52.6 601.6 L57.9 602.4"/></g><rect x="49.3" y="600.2" width="1.3" height="1.3" fill="#3a2020"/><circle cx="48.4" cy="598.4" r="0.45" fill="#244"/><circle cx="51.4" cy="598.4" r="0.45" fill="#244"/></svg>
</body></html>
